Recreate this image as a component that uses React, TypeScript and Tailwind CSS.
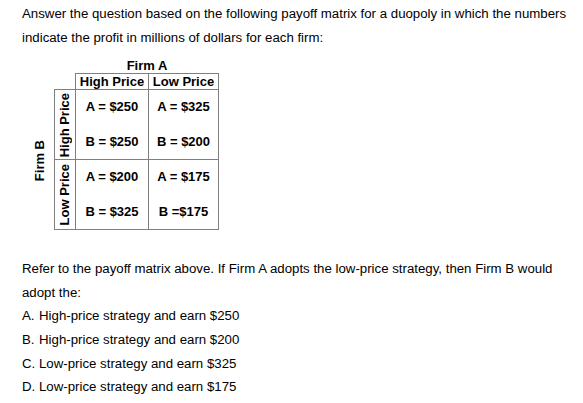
import React from "react";

const font = { fontFamily: '"Liberation Sans", Arial, sans-serif' };

function Cell({ a, b, className }: { a: string; b: string; className: string }) {
  return (
    <div className={"flex flex-col h-[70px] border-[#7f7f7f] " + className}>
      <div className="h-[35px] flex items-center justify-center whitespace-pre">{a}</div>
      <div className="h-[35px] flex items-center justify-center whitespace-pre">{b}</div>
    </div>
  );
}

export default function App() {
  const options = [
    ["A.", "High-price strategy and earn $250"],
    ["B.", "High-price strategy and earn $200"],
    ["C.", "Low-price strategy and earn $325"],
    ["D.", "Low-price strategy and earn $175"],
  ];
  return (
    <div
      className="w-[583px] h-[403px] bg-white text-black text-[13.25px] leading-[23.6px] pl-[22px] pt-[2px] overflow-hidden"
      style={font}
    >
      <p>
        Answer the question based on the following payoff matrix for a duopoly in which the numbers
        <br />
        indicate the profit in millions of dollars for each firm:
      </p>

      <div className="flex mt-[9px] font-bold text-[13px] leading-[16px]">
        <div className="w-[32px] flex flex-col">
          <div className="h-[32px]" />
          <div className="h-[140px] flex items-center justify-center pl-[4px]">
            <span className="[writing-mode:vertical-rl] rotate-180 whitespace-nowrap">Firm B</span>
          </div>
        </div>
        <div className="flex flex-col">
          <div className="flex h-[15px]">
            <div className="w-[21px]" />
            <div className="w-[144px] text-center leading-[15px]">Firm A</div>
          </div>
          <div className="flex">
            <div className="w-[21px] h-[17px] border-b border-[#7f7f7f]" />
            <div className="w-[74px] h-[17px] border border-[#7f7f7f] flex items-center justify-center">
              High Price
            </div>
            <div className="w-[70px] h-[17px] border-t border-r border-b border-[#7f7f7f] flex items-center justify-center">
              Low Price
            </div>
          </div>
          <div className="flex">
            <div className="w-[22px] h-[70px] border-l border-r border-b border-[#7f7f7f] flex items-center justify-center">
              <span className="[writing-mode:vertical-rl] rotate-180 whitespace-nowrap">High Price</span>
            </div>
            <Cell a="A = $250" b="B = $250" className="w-[73px] border-r border-b" />
            <Cell a="A = $325" b="B = $200" className="w-[70px] border-r border-b" />
          </div>
          <div className="flex">
            <div className="w-[22px] h-[70px] border-l border-r border-b border-[#7f7f7f] flex items-center justify-center">
              <span className="[writing-mode:vertical-rl] rotate-180 whitespace-nowrap">Low Price</span>
            </div>
            <Cell a="A = $200" b="B = $325" className="w-[73px] border-r border-b" />
            <Cell a="A = $175" b="B =$175" className="w-[70px] border-r border-b" />
          </div>
        </div>
      </div>

      <p className="mt-[27px]">
        Refer to the payoff matrix above. If Firm A adopts the low-price strategy, then Firm B would
        <br />
        adopt the:
      </p>
      {options.map(([k, t]) => (
        <div key={k} className="flex">
          <span className="w-[17px]">{k}</span>
          <span>{t}</span>
        </div>
      ))}
    </div>
  );
}
